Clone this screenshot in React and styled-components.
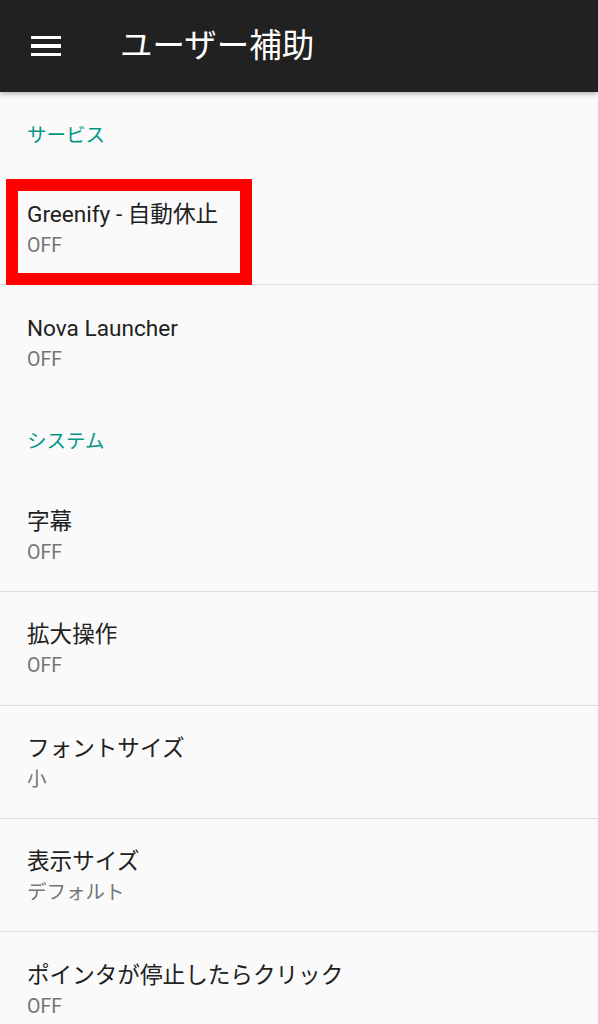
import React from "react";
import styled, { createGlobalStyle } from "styled-components";

const GlobalStyle = createGlobalStyle`
  html, body {
    margin: 0;
    padding: 0;
    background: #fafafa;
    overflow: hidden;
  }
  body {
    font-family: Roboto, "Noto Sans CJK JP", sans-serif;
  }
`;

const Screen = styled.div`
  width: 598px;
  min-height: 1024px;
  background: #fafafa;
`;

const AppBar = styled.header`
  position: relative;
  z-index: 2;
  height: 92px;
  display: flex;
  align-items: center;
  background: #212121;
  box-shadow: 0 2px 5px rgba(0, 0, 0, 0.28);
`;

const MenuButton = styled.div`
  width: 30px;
  margin-left: 31px;
  margin-right: 60px;
  display: flex;
  flex-direction: column;
  gap: 5px;
`;

const MenuLine = styled.span`
  display: block;
  height: 3.5px;
  background: #ffffff;
`;

const Title = styled.h1`
  margin: 0 0 0 -1px;
  font-size: 32.5px;
  font-weight: 400;
  color: #ffffff;
  line-height: 1;
`;

const List = styled.div`
  display: flex;
  flex-direction: column;
`;

const Category = styled.div`
  height: 80px;
  display: flex;
  align-items: center;
  padding-left: 27px;
  padding-top: 2px;
  box-sizing: border-box;
  font-size: 19.5px;
  color: #009688;
`;

const Row = styled.div`
  position: relative;
  box-sizing: border-box;
  height: 113.4px;
  padding-left: 27px;
  display: flex;
  flex-direction: column;
  justify-content: center;
  border-bottom: ${(p) => (p.divider ? "1.5px solid #dcdcdc" : "none")};
`;

const RowTitle = styled.div`
  font-size: 22.6px;
  line-height: 30px;
  color: #212121;
  margin-top: 5px;
`;

const RowSummary = styled.div`
  font-size: 19.5px;
  line-height: 31px;
  color: #757575;
`;

const Highlight = styled.div`
  position: absolute;
  left: 6px;
  top: 7px;
  width: 246px;
  height: 106px;
  box-sizing: border-box;
  border: 12px solid #ff0000;
  pointer-events: none;
`;

const sections = [
  {
    name: "サービス",
    items: [
      { title: "Greenify - 自動休止", summary: "OFF", marked: true },
      { title: "Nova Launcher", summary: "OFF" },
    ],
  },
  {
    name: "システム",
    items: [
      { title: "字幕", summary: "OFF" },
      { title: "拡大操作", summary: "OFF" },
      { title: "フォントサイズ", summary: "小" },
      { title: "表示サイズ", summary: "デフォルト" },
      { title: "ポインタが停止したらクリック", summary: "OFF" },
    ],
  },
];

const App = () => {
  return (
    <Screen>
      <GlobalStyle />
      <AppBar>
        <MenuButton>
          <MenuLine />
          <MenuLine />
          <MenuLine />
        </MenuButton>
        <Title>ユーザー補助</Title>
      </AppBar>
      <List>
        {sections.map((section) => (
          <React.Fragment key={section.name}>
            <Category>{section.name}</Category>
            {section.items.map((item, i) => (
              <Row key={item.title} divider={i < section.items.length - 1 || section.name === "システム"}>
                <RowTitle>{item.title}</RowTitle>
                <RowSummary>{item.summary}</RowSummary>
                {item.marked && <Highlight />}
              </Row>
            ))}
          </React.Fragment>
        ))}
      </List>
    </Screen>
  );
};

export default App;
